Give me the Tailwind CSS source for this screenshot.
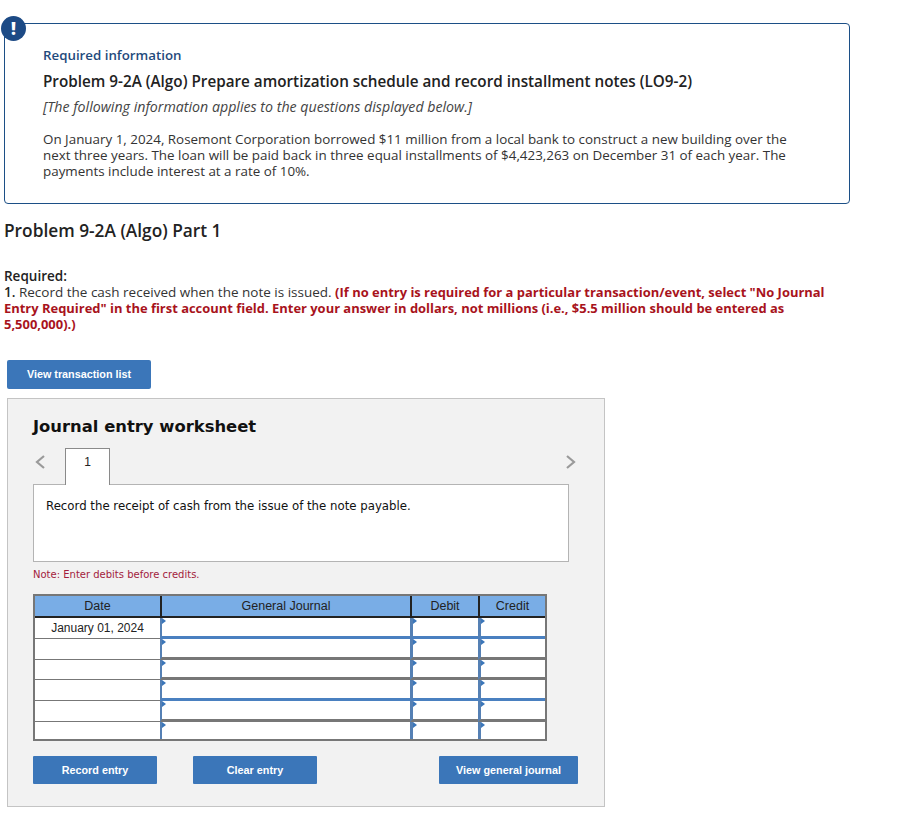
<!DOCTYPE html>
<html>
<head>
    <meta charset="UTF-8" />
    <title>Problem 9-2A (Algo)</title>
    <script src="https://cdn.jsdelivr.net/npm/@tailwindcss/browser@4"></script>
</head>
<body class="bg-white font-['Open_Sans','Lato',sans-serif] text-[#222]">
<div class="w-[909px] h-[819px] overflow-hidden pt-[23px] pl-[4px]">

    <!-- REQUIRED INFORMATION -->
    <div class="relative w-[846px] h-[181px] border border-[#1c4f86] rounded-[4px] pl-[38px] pt-[22px]">
        <div class="absolute left-[-4px] top-[-8px] w-[25px] h-[25px] rounded-full bg-[#1c4a85] text-white flex items-center justify-center font-extrabold text-[17px] leading-none">!</div>
        <p class="text-[13.3px] leading-[18px] font-semibold text-[#1f4a7c]">Required information</p>
        <p class="mt-[7px] text-[15.25px] leading-[20px] font-semibold text-[#222]">Problem 9-2A (Algo) Prepare amortization schedule and record installment notes (LO9-2)</p>
        <p class="mt-[7px] text-[14.2px] leading-[18px] italic text-[#444]">[The following information applies to the questions displayed below.]</p>
        <p class="mt-[15px] w-[770px] text-[13.4px] leading-[16px] text-[#333]">On January 1, 2024, Rosemont Corporation borrowed $11 million from a local bank to construct a new building over the next three years. The loan will be paid back in three equal installments of $4,423,263 on December 31 of each year. The payments include interest at a rate of 10%.</p>
    </div>

    <h2 class="mt-[17px] text-[17.3px] leading-[20px] font-semibold text-[#222]">Problem 9-2A (Algo) Part 1</h2>

    <!-- REQUIRED -->
    <div class="mt-[27px] w-[840px] text-[13.5px] leading-[16px] text-[#333]">
        <p class="font-semibold text-[#222]">Required:</p>
        <p><b class="font-semibold text-[#222]">1.</b> Record the cash received when the note is issued. <b class="text-[12.95px] font-bold text-[#a8131c]">(If no entry is required for a particular transaction/event, select "No Journal Entry Required" in the first account field. Enter your answer in dollars, not millions (i.e., $5.5 million should be entered as 5,500,000).)</b></p>
    </div>

    <button class="block mt-[28px] ml-[3px] w-[144px] h-[29px] rounded-[2px] bg-[#3b76b9] text-white text-[10.8px] font-bold font-['Liberation_Sans',sans-serif]">View transaction list</button>

    <!-- WORKSHEET -->
    <div class="mt-[9px] ml-[3px] w-[598px] h-[409px] bg-[#f2f2f2] border border-[#c4c4c4] pl-[25px] pt-[17px] font-['DejaVu_Sans',sans-serif] relative">
        <h3 class="text-[16.4px] leading-[22px] font-bold text-[#111]">Journal entry worksheet</h3>

        <div class="mt-[10px] flex h-[37px] items-start relative">
            <svg class="mt-[7px] ml-[1px] w-[12px] h-[14px]" viewBox="0 0 12 14" fill="none" stroke="#9a9a9a" stroke-width="2.2"><path d="M10 1 L3 7 L10 13"/></svg>
            <div class="ml-[19px] w-[45px] h-[37px] bg-white border border-b-0 border-[#8a8a8a] text-center text-[12px] leading-[26px] font-['Liberation_Sans',sans-serif] z-10">1</div>
            <svg class="absolute left-[532px] top-[7px] w-[12px] h-[14px]" viewBox="0 0 12 14" fill="none" stroke="#9a9a9a" stroke-width="2.2"><path d="M2 1 L9 7 L2 13"/></svg>
        </div>
        <div class="w-[536px] h-[78px] -mt-[1px] bg-white border border-[#b4b4b4] pl-[12px] pt-[12px] text-[11.75px] leading-[18px] text-[#111]">Record the receipt of cash from the issue of the note payable.</div>
        <p class="mt-[6px] text-[10px] leading-[14px] text-[#a31c3c]">Note: Enter debits before credits.</p>

        <table class="mt-[12px] w-[514px] table-fixed border-separate border-spacing-0 border-2 border-[#777] font-['Liberation_Sans',sans-serif] text-[12px] text-[#222]">
            <colgroup><col class="w-[125px]"><col class="w-[250px]"><col class="w-[68px]"><col class="w-[67px]"></colgroup>
            <thead>
                <tr class="h-[22px] bg-[#79ade6]">
                    <th class="font-normal border-b-2 border-[#222] text-[12.5px]">Date</th>
                    <th class="font-normal border-b-2 border-l-2 border-[#222] text-[12.5px]">General Journal</th>
                    <th class="font-normal border-b-2 border-l-2 border-[#222] text-[12.5px]">Debit</th>
                    <th class="font-normal border-b-2 border-l-2 border-[#222] text-[12.5px]">Credit</th>
                </tr>
            </thead>
            <tbody class="bg-white">
                <tr class="h-[21px]">
                    <td class="text-center border-b border-[#777]">January 01, 2024</td>
                    <td class="relative border-l-2 border-b-[3px] border-l-[#5580b4] border-b-[#4a80c0]"><span class="absolute left-0 top-0 border-y-[3px] border-l-[4px] border-y-transparent border-l-[#3b76b9]"></span></td>
                    <td class="relative border-l-[3px] border-b-[3px] border-l-[#5580b4] border-b-[#4a80c0]"><span class="absolute left-0 top-0 border-y-[3px] border-l-[4px] border-y-transparent border-l-[#3b76b9]"></span></td>
                    <td class="relative border-l-[3px] border-b-[3px] border-l-[#5580b4] border-b-[#4a80c0]"><span class="absolute left-0 top-0 border-y-[3px] border-l-[4px] border-y-transparent border-l-[#3b76b9]"></span></td>
                </tr>
                <tr class="h-[21px]">
                    <td class="border-b border-[#777]"></td>
                    <td class="relative border-l-2 border-b-[3px] border-l-[#5580b4] border-b-[#777]"><span class="absolute left-0 top-0 border-y-[3px] border-l-[4px] border-y-transparent border-l-[#3b76b9]"></span></td>
                    <td class="relative border-l-[3px] border-b-[3px] border-l-[#5580b4] border-b-[#777]"><span class="absolute left-0 top-0 border-y-[3px] border-l-[4px] border-y-transparent border-l-[#3b76b9]"></span></td>
                    <td class="relative border-l-[3px] border-b-[3px] border-l-[#5580b4] border-b-[#777]"><span class="absolute left-0 top-0 border-y-[3px] border-l-[4px] border-y-transparent border-l-[#3b76b9]"></span></td>
                </tr>
                <tr class="h-[20px]">
                    <td class="border-b border-[#777]"></td>
                    <td class="relative border-l-2 border-b-[3px] border-l-[#5580b4] border-b-[#777]"><span class="absolute left-0 top-0 border-y-[3px] border-l-[4px] border-y-transparent border-l-[#3b76b9]"></span></td>
                    <td class="relative border-l-[3px] border-b-[3px] border-l-[#5580b4] border-b-[#777]"><span class="absolute left-0 top-0 border-y-[3px] border-l-[4px] border-y-transparent border-l-[#3b76b9]"></span></td>
                    <td class="relative border-l-[3px] border-b-[3px] border-l-[#5580b4] border-b-[#777]"><span class="absolute left-0 top-0 border-y-[3px] border-l-[4px] border-y-transparent border-l-[#3b76b9]"></span></td>
                </tr>
                <tr class="h-[21px]">
                    <td class="border-b border-[#777]"></td>
                    <td class="relative border-l-2 border-b-[3px] border-l-[#5580b4] border-b-[#4a80c0]"><span class="absolute left-0 top-0 border-y-[3px] border-l-[4px] border-y-transparent border-l-[#3b76b9]"></span></td>
                    <td class="relative border-l-[3px] border-b-[3px] border-l-[#5580b4] border-b-[#4a80c0]"><span class="absolute left-0 top-0 border-y-[3px] border-l-[4px] border-y-transparent border-l-[#3b76b9]"></span></td>
                    <td class="relative border-l-[3px] border-b-[3px] border-l-[#5580b4] border-b-[#4a80c0]"><span class="absolute left-0 top-0 border-y-[3px] border-l-[4px] border-y-transparent border-l-[#3b76b9]"></span></td>
                </tr>
                <tr class="h-[21px]">
                    <td class="border-b border-[#777]"></td>
                    <td class="relative border-l-2 border-b-[3px] border-l-[#5580b4] border-b-[#777]"><span class="absolute left-0 top-0 border-y-[3px] border-l-[4px] border-y-transparent border-l-[#3b76b9]"></span></td>
                    <td class="relative border-l-[3px] border-b-[3px] border-l-[#5580b4] border-b-[#777]"><span class="absolute left-0 top-0 border-y-[3px] border-l-[4px] border-y-transparent border-l-[#3b76b9]"></span></td>
                    <td class="relative border-l-[3px] border-b-[3px] border-l-[#5580b4] border-b-[#777]"><span class="absolute left-0 top-0 border-y-[3px] border-l-[4px] border-y-transparent border-l-[#3b76b9]"></span></td>
                </tr>
                <tr class="h-[17px]">
                    <td></td>
                    <td class="relative border-l-2 border-l-[#5580b4]"><span class="absolute left-0 top-0 border-y-[3px] border-l-[4px] border-y-transparent border-l-[#3b76b9]"></span></td>
                    <td class="relative border-l-[3px] border-l-[#5580b4]"><span class="absolute left-0 top-0 border-y-[3px] border-l-[4px] border-y-transparent border-l-[#3b76b9]"></span></td>
                    <td class="relative border-l-[3px] border-l-[#5580b4]"><span class="absolute left-0 top-0 border-y-[3px] border-l-[4px] border-y-transparent border-l-[#3b76b9]"></span></td>
                </tr>
            </tbody>
        </table>

        <div class="mt-[15px] flex font-['Liberation_Sans',sans-serif] text-[10.8px] font-bold text-white">
            <button class="w-[124px] h-[28px] bg-[#3b76b9] rounded-[1px]">Record entry</button>
            <button class="ml-[36px] w-[124px] h-[28px] bg-[#3b76b9] rounded-[1px]">Clear entry</button>
            <button class="ml-[122px] w-[139px] h-[28px] bg-[#3b76b9] rounded-[1px]">View general journal</button>
        </div>
    </div>
</div>
</body>
</html>
